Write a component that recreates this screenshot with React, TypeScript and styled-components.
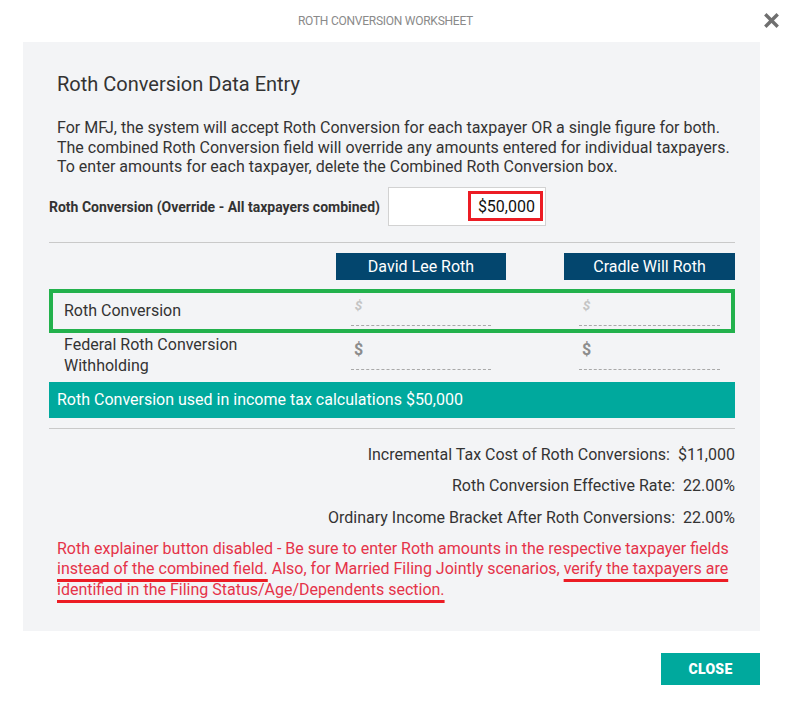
import styled, { createGlobalStyle } from 'styled-components';

const GlobalStyle = createGlobalStyle`
  html, body {
    margin: 0;
    padding: 0;
    background: #ffffff;
  }
  body {
    font-family: Roboto, 'Noto Sans', Arial, sans-serif;
    color: #333333;
  }
  * {
    box-sizing: border-box;
  }
`;

type Stat = { label: string; value: string };

const stats: Stat[] = [
  { label: 'Incremental Tax Cost of Roth Conversions:', value: '$11,000' },
  { label: 'Roth Conversion Effective Rate:', value: '22.00%' },
  { label: 'Ordinary Income Bracket After Roth Conversions:', value: '22.00%' },
];

export default function App() {
  return (
    <>
      <GlobalStyle />
      <Dialog>
        <Header>
          <Title>Roth Conversion Worksheet</Title>
          <CloseIcon aria-label="close">
            <svg width="15" height="15" viewBox="0 0 15 15">
              <path
                d="M2.5 2.5 L12.5 12.5 M12.5 2.5 L2.5 12.5"
                stroke="#6f6f6f"
                strokeWidth="3.4"
                strokeLinecap="square"
              />
            </svg>
          </CloseIcon>
        </Header>

        <Panel>
          <Heading>Roth Conversion Data Entry</Heading>
          <Intro>
            For MFJ, the system will accept Roth Conversion for each taxpayer OR a single figure for both.
            <br />
            The combined Roth Conversion field will override any amounts entered for individual taxpayers.
            <br />
            To enter amounts for each taxpayer, delete the Combined Roth Conversion box.
          </Intro>

          <OverrideRow>
            <OverrideLabel>Roth Conversion (Override - All taxpayers combined)</OverrideLabel>
            <OverrideInput>
              <Marked>$50,000</Marked>
            </OverrideInput>
          </OverrideRow>

          <Rule $top={16} />

          <Grid>
            <span />
            <PersonHead>David Lee Roth</PersonHead>
            <PersonHead>Cradle Will Roth</PersonHead>
          </Grid>

          <EntryRow $highlight>
            <RowLabel>Roth Conversion</RowLabel>
            <MoneyField>
              <Dollar $faded>$</Dollar>
            </MoneyField>
            <MoneyField>
              <Dollar $faded>$</Dollar>
            </MoneyField>
          </EntryRow>

          <EntryRow>
            <RowLabel>
              Federal Roth Conversion
              <br />
              Withholding
            </RowLabel>
            <MoneyField>
              <Dollar>$</Dollar>
            </MoneyField>
            <MoneyField>
              <Dollar>$</Dollar>
            </MoneyField>
          </EntryRow>

          <TotalBar>Roth Conversion used in income tax calculations $50,000</TotalBar>

          <Rule $top={10} />

          <Stats>
            {stats.map((s) => (
              <StatLine key={s.label}>
                <span>{s.label}</span>
                <span>{s.value}</span>
              </StatLine>
            ))}
          </Stats>

          <Warning>
            Roth explainer button disabled - Be sure to enter Roth amounts in the respective taxpayer fields{' '}
            <Underlined>instead of the combined field.</Underlined> Also, for Married Filing Jointly scenarios,{' '}
            <Underlined>verify the taxpayers are</Underlined>{' '}
            <Underlined>identified in the Filing Status/Age/Dependents section.</Underlined>
          </Warning>
        </Panel>

        <Footer>
          <CloseButton type="button">Close</CloseButton>
        </Footer>
      </Dialog>
    </>
  );
}

const Dialog = styled.div`
  width: 785px;
  height: 702px;
  padding: 0 25px 0 23px;
`;

const Header = styled.div`
  height: 42px;
  display: flex;
  align-items: center;
  justify-content: center;
  position: relative;
`;

const Title = styled.div`
  font-size: 12px;
  text-transform: uppercase;
  color: #8a8a8a;
  letter-spacing: -0.25px;
  padding-right: 12px;
`;

const CloseIcon = styled.div`
  position: absolute;
  right: -19px;
  top: 13px;
  width: 15px;
  height: 15px;
  display: flex;
  cursor: pointer;
`;

const Panel = styled.div`
  background: #f3f4f6;
  padding: 30px 25px 31px 26px;
`;

const Heading = styled.h2`
  margin: 0 0 22px 8px;
  font-size: 20px;
  line-height: 24px;
  font-weight: 400;
  color: #333333;
`;

const Intro = styled.p`
  margin: 0 0 10px 8px;
  font-size: 16px;
  line-height: 19.5px;
  color: #333333;
`;

const OverrideRow = styled.div`
  display: flex;
  align-items: center;
  gap: 8px;
`;

const OverrideLabel = styled.div`
  font-size: 14px;
  font-weight: 700;
  color: #333333;
  margin-top: 2px;
`;

const OverrideInput = styled.div`
  width: 158px;
  height: 39px;
  background: #ffffff;
  border: 1px solid #d2d2d2;
  display: flex;
  align-items: center;
  justify-content: flex-end;
  padding-right: 2px;
`;

const Marked = styled.span`
  border: 3px solid #ec1c24;
  height: 30px;
  padding: 0 5px 0 7px;
  display: flex;
  align-items: center;
  font-size: 16px;
  color: #111111;
`;

const Rule = styled.hr<{ $top: number }>`
  border: 0;
  border-top: 1px solid #c9c9c9;
  margin: ${(p) => p.$top}px 0 10px;
`;

const Grid = styled.div`
  display: grid;
  grid-template-columns: 1fr 170px 171px;
  column-gap: 58px;
  margin-bottom: 9px;
`;

const PersonHead = styled.div`
  background: #03466e;
  color: #ffffff;
  height: 27px;
  font-size: 16px;
  display: flex;
  align-items: center;
  justify-content: center;
`;

const EntryRow = styled(Grid)<{ $highlight?: boolean }>`
  margin-bottom: 0;
  min-height: 44px;
  align-items: center;
  box-shadow: ${(p) => (p.$highlight ? 'inset 0 0 0 4px #22b14c' : 'none')};
`;

const RowLabel = styled.div`
  padding-left: 15px;
  font-size: 16px;
  line-height: 21px;
  color: #333333;
`;

const MoneyField = styled.div`
  margin: 0 15px 0 15px;
  height: 30px;
  border-bottom: 1px dashed #a9a9a9;
  padding: 0 3px;
  display: flex;
  align-items: flex-start;
`;

const Dollar = styled.span<{ $faded?: boolean }>`
  font-size: 16px;
  line-height: 20px;
  font-weight: 700;
  color: ${(p) => (p.$faded ? '#c4c4c4' : '#8c8c8c')};
  font-style: ${(p) => (p.$faded ? 'italic' : 'normal')};
  transform: ${(p) => (p.$faded ? 'scale(0.85)' : 'none')};
`;

const TotalBar = styled.div`
  margin-top: 5px;
  height: 36px;
  background: #00a99d;
  color: #ffffff;
  font-size: 16px;
  display: flex;
  align-items: center;
  padding-left: 8px;
`;

const Stats = styled.div`
  display: flex;
  flex-direction: column;
  align-items: flex-end;
  gap: 11.5px;
  margin-top: 16px;
`;

const StatLine = styled.div`
  display: flex;
  gap: 8px;
  font-size: 16px;
  line-height: 20px;
  color: #333333;
`;

const Warning = styled.p`
  margin: 11px 0 0 8px;
  font-size: 16px;
  line-height: 20.5px;
  color: #e53349;
`;

const Underlined = styled.span`
  text-decoration: underline;
  text-decoration-color: #ec1c24;
  text-decoration-thickness: 3px;
  text-underline-offset: 5px;
  text-decoration-skip-ink: none;
`;

const Footer = styled.div`
  display: flex;
  justify-content: flex-end;
  padding-top: 22px;
`;

const CloseButton = styled.button`
  width: 99px;
  height: 32px;
  border: 0;
  background: #00a99d;
  color: #ffffff;
  font-family: Roboto, Arial, sans-serif;
  font-size: 14px;
  font-weight: 900;
  text-transform: uppercase;
  letter-spacing: 0.3px;
  cursor: pointer;
`;
